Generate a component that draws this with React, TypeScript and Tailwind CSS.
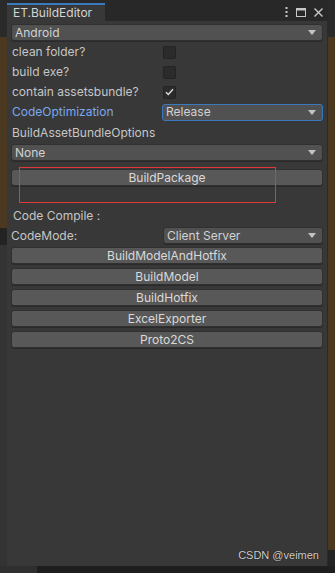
import React from "react"

const font = { fontFamily: "Inter, 'Liberation Sans', sans-serif" }

function Arrow() {
  return (
    <svg width="8" height="5" viewBox="0 0 8 5" className="shrink-0">
      <path d="M0 0h8L4 5z" fill="#c4c4c4" />
    </svg>
  )
}

function Dropdown({ value, focused, className = "" }: { value: string; focused?: boolean; className?: string }) {
  return (
    <div
      className={`flex h-[17px] items-center justify-between rounded-[3px] border pl-[3px] pr-[6px] text-[12px] leading-none text-[#d2d2d2] bg-[#515151] ${
        focused ? "border-[#3a79bb]" : "border-[#303030] shadow-[0_1px_0_#2a2a2a]"
      } ${className}`}
    >
      <span>{value}</span>
      <Arrow />
    </div>
  )
}

function Checkbox({ checked }: { checked?: boolean }) {
  return (
    <div className="flex h-[13px] w-[13px] items-center justify-center rounded-[2px] border border-[#232323] bg-[#2b2b2b]">
      {checked && (
        <svg width="9" height="8" viewBox="0 0 9 8">
          <path d="M1 4.2l2.3 2.3L8 1.2" stroke="#dcdcdc" strokeWidth="1.4" fill="none" />
        </svg>
      )}
    </div>
  )
}

function Button({ label }: { label: string }) {
  return (
    <div className="flex h-[17px] items-center justify-center rounded-[3px] border border-[#303030] bg-[#585858] text-[12px] leading-none text-[#dadada] shadow-[0_1px_0_#2a2a2a]">
      {label}
    </div>
  )
}

export default function App() {
  const toggles = [
    { label: "clean folder?", checked: false },
    { label: "build exe?", checked: false },
    { label: "contain assetsbundle?", checked: true },
  ]

  return (
    <div className="flex h-[573px] w-[335px] flex-col bg-[#1e1e1e]" style={font}>
      <div className="flex flex-1">
        {/* left backdrop */}
        <div className="flex w-[7px] flex-col">
          <div className="h-[37px] bg-[#2a2a2a]" />
          <div className="h-[191px] bg-[#4a3920]" />
          <div className="h-[17px] bg-[#232323]" />
          <div className="flex-1 bg-[#333333]" />
        </div>

        {/* editor window */}
        <div className="flex w-[321px] flex-col">
          <div className="flex h-[21px] items-end bg-[#282828]">
            <div className="flex h-[18px] w-[98px] items-center border-t-2 border-[#3a79bb] bg-[#383838] pl-[6px] text-[12px] text-[#d4d4d4]">
              ET.BuildEditor
            </div>
            <div className="flex flex-1 items-center justify-end gap-[8px] self-stretch pr-[5px] pt-[3px]">
              <svg width="3" height="10" viewBox="0 0 3 10">
                <rect x="0.5" y="0" width="2" height="2" fill="#c8c8c8" />
                <rect x="0.5" y="4" width="2" height="2" fill="#c8c8c8" />
                <rect x="0.5" y="8" width="2" height="2" fill="#c8c8c8" />
              </svg>
              <svg width="10" height="9" viewBox="0 0 10 9">
                <rect x="0.5" y="0.5" width="9" height="8" stroke="#c8c8c8" fill="none" />
                <rect x="0.5" y="0.5" width="9" height="2" fill="#c8c8c8" />
              </svg>
              <svg width="9" height="9" viewBox="0 0 9 9">
                <path d="M0.5 0.5l8 8M8.5 0.5l-8 8" stroke="#c8c8c8" strokeWidth="1.4" />
              </svg>
            </div>
          </div>

          <div className="relative flex flex-1 flex-col border-r border-[#2a2a2a] bg-[#383838] px-[4px] pt-[3px] text-[12px] text-[#c6c6c6]">
            <Dropdown value="Android" />

            <div className="mt-[1px] flex flex-col">
              {toggles.map((t) => (
                <div key={t.label} className="flex h-[20px] items-center">
                  <span className="w-[152px] pl-[1px]">{t.label}</span>
                  <Checkbox checked={t.checked} />
                </div>
              ))}
              <div className="flex h-[20px] items-center">
                <span className="w-[151px] pl-[1px] text-[#7ba7ee]">CodeOptimization</span>
                <Dropdown value="Release" focused className="flex-1" />
              </div>
            </div>

            <div className="flex h-[22px] items-center pl-[1px]">BuildAssetBundleOptions</div>
            <Dropdown value="None" />

            <div className="mt-[8px]">
              <Button label="BuildPackage" />
            </div>

            <div className="mt-[21px] flex h-[18px] items-center pl-[2px]">Code Compile :</div>
            <div className="mt-[2px] flex h-[17px] items-center">
              <span className="w-[152px]">CodeMode:</span>
              <Dropdown value="Client Server" className="flex-1" />
            </div>

            <div className="mt-[3px] flex flex-col gap-[4px]">
              <Button label="BuildModelAndHotfix" />
              <Button label="BuildModel" />
              <Button label="BuildHotfix" />
              <Button label="ExcelExporter" />
              <Button label="Proto2CS" />
            </div>

            {/* red annotation box */}
            <div className="absolute left-[12px] top-[146px] h-[36px] w-[257px] border border-[#e2383a]" />

            {/* watermark */}
            <div
              className="absolute bottom-[3px] right-[8px] text-[#cfcfcf] [text-shadow:0_0_1px_#000]"
              style={{ fontFamily: "'Liberation Sans', sans-serif", fontSize: "11px" }}
            >
              CSDN @veimen
            </div>
          </div>
        </div>

        {/* right backdrop */}
        <div className="flex w-[7px] flex-col">
          <div className="h-[37px] bg-[#2a2a2a]" />
          <div className="h-[513px] bg-[#4a3920]" />
          <div className="flex-1 bg-[#232323]" />
        </div>
      </div>
      <div className="flex h-[7px]">
        <div className="w-[37px] bg-[#2f2f2f]" />
        <div className="flex-1 bg-[#1e1e1e]" />
      </div>
    </div>
  )
}
